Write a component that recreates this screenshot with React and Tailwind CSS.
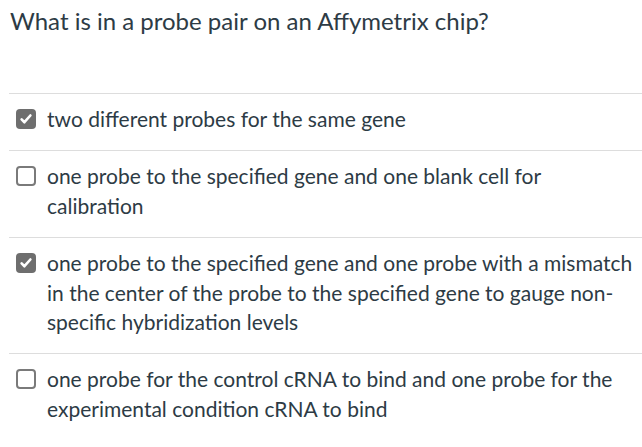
import React from 'react';

const answers = [
  { text: 'two different probes for the same gene', checked: true },
  { text: 'one probe to the specified gene and one blank cell for calibration', checked: false },
  {
    text: 'one probe to the specified gene and one probe with a mismatch in the center of the probe to the specified gene to gauge non-specific hybridization levels',
    checked: true,
  },
  { text: 'one probe for the control cRNA to bind and one probe for the experimental condition cRNA to bind', checked: false },
];

const Box = ({ checked }) =>
  checked ? (
    <span className="mt-[5px] flex h-[20px] w-[20px] shrink-0 items-center justify-center rounded-[4px] bg-[#6e6e6e]">
      <svg viewBox="0 0 16 16" className="h-[14px] w-[14px]" fill="none" stroke="white" strokeWidth={3} strokeLinecap="round" strokeLinejoin="round">
        <path d="M3 8.5l3.2 3.2L13 4" />
      </svg>
    </span>
  ) : (
    <span className="mt-[5px] h-[20px] w-[20px] shrink-0 rounded-[4px] border-2 border-[#7a7a7a] bg-white" />
  );

export default function App() {
  return (
    <div className="h-[447px] w-[642px] overflow-hidden bg-white font-['Lato',sans-serif] text-[#2d3b45]">
      <h1 className="pl-[10px] pt-[4px] text-[24px] leading-[34px]">What is in a probe pair on an Affymetrix chip?</h1>
      <div className="ml-[9px] mt-[55px] border-t border-[#dddddd]">
        {answers.map((a, i) => (
          <div key={i} className="flex gap-[11px] border-b border-[#dddddd] pb-[17px] pl-[7px] pr-[4px] pt-[10px] last:border-b-0">
            <Box checked={a.checked} />
            <p className="text-[21px] leading-[1.4]">{a.text}</p>
          </div>
        ))}
      </div>
    </div>
  );
}
